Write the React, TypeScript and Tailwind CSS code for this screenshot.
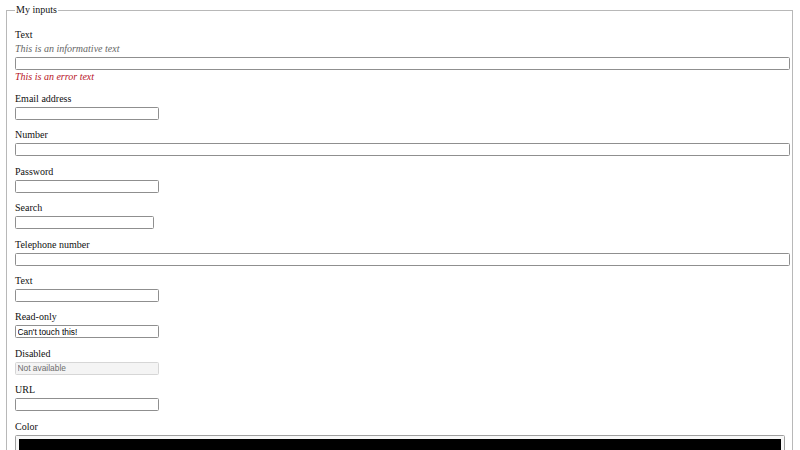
import React from "react";

const inputBase =
  "block h-[13px] border border-[#8f8f8f] rounded-[1.5px] bg-white px-[1.5px] text-[8.4px] leading-[11px] text-black font-['Liberation_Sans',Arial,sans-serif] outline-none";

function Field({
  label,
  width,
  type = "text",
  value,
  extra = "",
  disabled = false,
  readOnly = false,
}: {
  label: string;
  width: string;
  type?: string;
  value?: string;
  extra?: string;
  disabled?: boolean;
  readOnly?: boolean;
}) {
  return (
    <div className="flex flex-col mb-[6.4px]">
      <label className="pt-[1px] leading-[16px]">{label}</label>
      <input
        type={type}
        defaultValue={value}
        disabled={disabled}
        readOnly={readOnly}
        className={`${inputBase} ${width} ${extra}`}
      />
    </div>
  );
}

export default function App() {
  return (
    <div className="w-[800px] h-[450px] overflow-hidden bg-white font-['Liberation_Serif','Times_New_Roman',serif] text-[10px] text-[#111]">
      <fieldset className="ml-[6px] mr-[7px] border border-[#b8b8b8] pl-[8px] pr-[2px] pb-4">
        <legend className="px-[1px] leading-[20px]">My inputs</legend>
        <div className="flex flex-col mt-[8px]">
          <label className="leading-[14px]">Text</label>
          <span className="leading-[14px] italic text-[#666666]">This is an informative text</span>
          <input type="text" className={`${inputBase} w-full mt-[1px]`} />
          <span className="leading-[14px] italic text-[#b8141f]">This is an error text</span>
        </div>
        <div className="h-[6px]" />
        <Field label="Email address" type="email" width="w-[144px]" />
        <Field label="Number" type="number" width="w-full" />
        <Field label="Password" type="password" width="w-[144px]" />
        <Field label="Search" type="search" width="w-[139px]" />
        <Field label="Telephone number" type="tel" width="w-full" />
        <Field label="Text" width="w-[144px]" />
        <Field label="Read-only" width="w-[144px]" value="Can't touch this!" readOnly />
        <Field
          label="Disabled"
          width="w-[144px]"
          value="Not available"
          disabled
          extra="!bg-[#f4f4f4] !border-[#d6d6d6] !text-[#6d6d6d]"
        />
        <Field label="URL" type="url" width="w-[144px]" />
        <div className="flex flex-col">
          <label className="pt-[1px] leading-[16px]">Color</label>
          <div className="w-[770px] h-[20px] border border-[#a0a0a0] rounded-[1.5px] bg-[#f7f7f7] p-[3px]">
            <div className="h-full bg-black" />
          </div>
        </div>
      </fieldset>
    </div>
  );
}
